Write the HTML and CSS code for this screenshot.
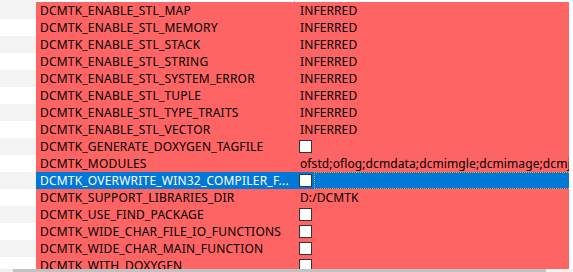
FILE: index.html
```html
<!DOCTYPE html>
<html lang="en">

<head>
  <meta charset="UTF-8">
  <meta name="viewport" content="width=device-width, initial-scale=1">
  <title>CMake cache entries</title>
  <link rel="stylesheet" href="styles.css">
</head>

<body>
  <div class="cache">
    <div class="cache__header">
      <div class="cache__gutter"></div>
      <div class="cache__head-name"></div>
      <div class="cache__head-value"></div>
    </div>
    <div class="cache__rows">
      <div class="row row--even">
        <div class="row__gutter"></div>
        <div class="row__name">DCMTK_ENABLE_STL_MAP</div>
        <div class="row__value">INFERRED</div>
      </div>
      <div class="row">
        <div class="row__gutter"></div>
        <div class="row__name">DCMTK_ENABLE_STL_MEMORY</div>
        <div class="row__value">INFERRED</div>
      </div>
      <div class="row row--even">
        <div class="row__gutter"></div>
        <div class="row__name">DCMTK_ENABLE_STL_STACK</div>
        <div class="row__value">INFERRED</div>
      </div>
      <div class="row">
        <div class="row__gutter"></div>
        <div class="row__name">DCMTK_ENABLE_STL_STRING</div>
        <div class="row__value">INFERRED</div>
      </div>
      <div class="row row--even">
        <div class="row__gutter"></div>
        <div class="row__name">DCMTK_ENABLE_STL_SYSTEM_ERROR</div>
        <div class="row__value">INFERRED</div>
      </div>
      <div class="row">
        <div class="row__gutter"></div>
        <div class="row__name">DCMTK_ENABLE_STL_TUPLE</div>
        <div class="row__value">INFERRED</div>
      </div>
      <div class="row row--even">
        <div class="row__gutter"></div>
        <div class="row__name">DCMTK_ENABLE_STL_TYPE_TRAITS</div>
        <div class="row__value">INFERRED</div>
      </div>
      <div class="row">
        <div class="row__gutter"></div>
        <div class="row__name">DCMTK_ENABLE_STL_VECTOR</div>
        <div class="row__value">INFERRED</div>
      </div>
      <div class="row row--even">
        <div class="row__gutter"></div>
        <div class="row__name">DCMTK_GENERATE_DOXYGEN_TAGFILE</div>
        <div class="row__value"><span class="check"></span></div>
      </div>
      <div class="row">
        <div class="row__gutter"></div>
        <div class="row__name">DCMTK_MODULES</div>
        <div class="row__value">ofstd;oflog;dcmdata;dcmimgle;dcmimage;dcmjpeg;dcmjpls;dcmtls;dcmnet</div>
      </div>
      <div class="row row--even row--selected">
        <div class="row__gutter"></div>
        <div class="row__name">DCMTK_OVERWRITE_WIN32_COMPILER_F...</div>
        <div class="row__value"><span class="check"></span><span class="row__focus"></span></div>
      </div>
      <div class="row">
        <div class="row__gutter"></div>
        <div class="row__name">DCMTK_SUPPORT_LIBRARIES_DIR</div>
        <div class="row__value">D:/DCMTK</div>
      </div>
      <div class="row row--even">
        <div class="row__gutter"></div>
        <div class="row__name">DCMTK_USE_FIND_PACKAGE</div>
        <div class="row__value"><span class="check"></span></div>
      </div>
      <div class="row">
        <div class="row__gutter"></div>
        <div class="row__name">DCMTK_WIDE_CHAR_FILE_IO_FUNCTIONS</div>
        <div class="row__value"><span class="check"></span></div>
      </div>
      <div class="row row--even">
        <div class="row__gutter"></div>
        <div class="row__name">DCMTK_WIDE_CHAR_MAIN_FUNCTION</div>
        <div class="row__value"><span class="check"></span></div>
      </div>
      <div class="row">
        <div class="row__gutter"></div>
        <div class="row__name">DCMTK_WITH_DOXYGEN</div>
        <div class="row__value"><span class="check"></span></div>
      </div>
    </div>
    <div class="scrollbar">
      <div class="scrollbar__thumb"></div>
    </div>
  </div>
</body>

</html>
```

FILE: styles.css
```css
* {
  box-sizing: border-box;
  padding: 0;
  margin: 0;
}

body {
  font-family: "Noto Sans", "Open Sans", sans-serif;
  font-size: 12px;
  letter-spacing: 0.2px;
  background-color: #fff;
  color: #000;
  overflow: hidden;
}

/* whole cache view */
.cache {
  width: 573px;
  height: 272px;
  display: flex;
  flex-direction: column;
  overflow: hidden;
}

/* thin remains of the header above the first row */
.cache__header {
  display: flex;
  height: 2px;
  flex-shrink: 0;
}

.cache__gutter {
  width: 36px;
  background-color: #f3f3f3;
}

.cache__head-name {
  width: 259px;
  border-right: 1px solid #d8d8d8;
}

.cache__head-value {
  flex: 1;
}

.cache__rows {
  flex: 1;
  overflow: hidden;
}

/* style rows */
.row {
  display: flex;
  height: 17px;
  line-height: 17px;
}

.row__gutter {
  width: 36px;
  flex-shrink: 0;
  background-color: #fff;
}

.row--even .row__gutter {
  background-color: #f3f3f3;
}

.row__name {
  width: 260px;
  flex-shrink: 0;
  padding-left: 4px;
  background-color: #ff6464;
  white-space: nowrap;
  overflow: hidden;
}

.row__value {
  width: 273px;
  flex-shrink: 0;
  padding-left: 4px;
  letter-spacing: 0.1px;
  background-color: #ff6464;
  white-space: nowrap;
  overflow: hidden;
  display: flex;
  align-items: center;
}

.check {
  display: block;
  width: 13px;
  height: 13px;
  margin-left: -1px;
  background-color: #fff;
  border: 1px solid #333;
}

/* selected row */
.row--selected .row__name,
.row--selected .row__value {
  background-color: #0078d7;
  color: #fff;
}

.row__focus {
  flex: 1;
  height: 17px;
  margin-left: 2px;
  border: 1px dotted #f5a623;
  border-right: 0;
}

/* horizontal scrollbar */
.scrollbar {
  height: 3px;
  flex-shrink: 0;
  background-color: #f0f0f0;
  padding-left: 13px;
}

.scrollbar__thumb {
  width: 533px;
  height: 100%;
  background-color: #c2c2c2;
}
```
